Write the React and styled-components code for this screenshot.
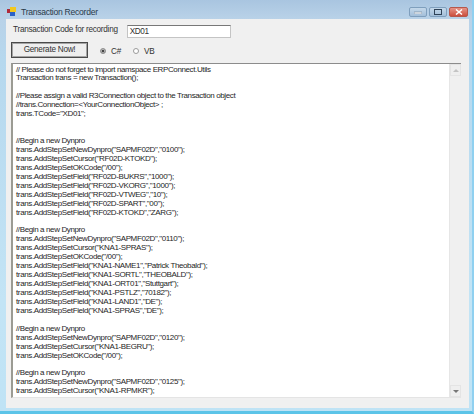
import React from "react";
import styled, { createGlobalStyle } from "styled-components";

const Global = createGlobalStyle`
  html, body {
    margin: 0;
    padding: 0;
    width: 474px;
    height: 414px;
    overflow: hidden;
    background: #9fd6f2;
  }
  * { box-sizing: border-box; }
`;

const code = `// Please do not forget to import namspace ERPConnect.Utils
Transaction trans = new Transaction();

//Please assign a valid R3Connection object to the Transaction object
//trans.Connection=<YourConnectionObject> ;
trans.TCode="XD01";


//Begin a new Dynpro
trans.AddStepSetNewDynpro("SAPMF02D","0100");
trans.AddStepSetCursor("RF02D-KTOKD");
trans.AddStepSetOKCode("/00");
trans.AddStepSetField("RF02D-BUKRS","1000");
trans.AddStepSetField("RF02D-VKORG","1000");
trans.AddStepSetField("RF02D-VTWEG","10");
trans.AddStepSetField("RF02D-SPART","00");
trans.AddStepSetField("RF02D-KTOKD","ZARG");

//Begin a new Dynpro
trans.AddStepSetNewDynpro("SAPMF02D","0110");
trans.AddStepSetCursor("KNA1-SPRAS");
trans.AddStepSetOKCode("/00");
trans.AddStepSetField("KNA1-NAME1","Patrick Theobald");
trans.AddStepSetField("KNA1-SORTL","THEOBALD");
trans.AddStepSetField("KNA1-ORT01","Stuttgart");
trans.AddStepSetField("KNA1-PSTLZ","70182");
trans.AddStepSetField("KNA1-LAND1","DE");
trans.AddStepSetField("KNA1-SPRAS","DE");

//Begin a new Dynpro
trans.AddStepSetNewDynpro("SAPMF02D","0120");
trans.AddStepSetCursor("KNA1-BEGRU");
trans.AddStepSetOKCode("/00");

//Begin a new Dynpro
trans.AddStepSetNewDynpro("SAPMF02D","0125");
trans.AddStepSetCursor("KNA1-RPMKR");`;

const Frame = styled.div`
  width: 474px;
  height: 414px;
  padding: 0 3px 3px 6px;
  display: flex;
  flex-direction: column;
  background: linear-gradient(180deg, #a9c5e0 0, #b9d2e8 19px, #b6d8ee 60px, #c3e4f5 300px, #bfe3f5 100%);
  border-right: 2px solid #8fd0f0;
  border-bottom: 3px solid #5cc4e8;
`;

const TitleBar = styled.div`
  height: 19px;
  flex: none;
  display: flex;
  align-items: center;
  gap: 4px;
  padding-left: 1px;
`;

const Title = styled.span`
  font: 8.6px "Liberation Sans", Arial, sans-serif;
  letter-spacing: -0.28px;
  color: #2a3a4a;
  flex: 1;
  margin-top: 5px;
`;

const Controls = styled.div`
  display: flex;
  gap: 2px;
  align-self: flex-start;
  margin-top: 7px;
  margin-right: 1px;
`;

const Control = styled.div`
  width: ${(p) => p.$w}px;
  height: 10px;
  border: 1px solid ${(p) => (p.$close ? "#b5584c" : "#7f9fbd")};
  border-radius: 2px;
  background: ${(p) =>
    p.$close
      ? "linear-gradient(180deg, #e59488, #cc4f3e)"
      : "linear-gradient(180deg, #c4d8ea, #a3bfd9)"};
  display: flex;
  align-items: center;
  justify-content: center;
`;

const Body = styled.div`
  flex: 1;
  min-height: 0;
  background: #f0f0f0;
  display: flex;
  flex-direction: column;
  padding: 6px 8px 10px 5px;
`;

const CodeRow = styled.div`
  display: flex;
  align-items: flex-start;
  height: 14px;
  gap: 9px;
  font: 8.2px "Liberation Sans", Arial, sans-serif;
  letter-spacing: -0.26px;
  color: #333;
`;

const CodeLabel = styled.label`
  padding: 0 0 0 2px;
`;

const CodeInput = styled.div`
  width: 104px;
  height: 13px;
  background: #fff;
  border: 1px solid #c4c4c4;
  border-top-color: #777;
  padding-left: 2px;
  font-size: 8.2px;
  letter-spacing: -0.4px;
  line-height: 12px;
`;

const ActionRow = styled.div`
  display: flex;
  align-items: center;
  gap: 12px;
  margin-top: 2px;
  height: 17px;
`;

const GenerateButton = styled.button`
  width: 77px;
  height: 16px;
  padding: 0;
  background: #eeeeee;
  border: 1px solid #4a4a4a;
  box-shadow: inset 0 0 0 1px #a4a4a4;
  font: 8.2px "Liberation Sans", Arial, sans-serif;
  letter-spacing: -0.26px;
  color: #333;
`;

const Radio = styled.label`
  display: flex;
  align-items: center;
  gap: 5px;
  margin-top: 3px;
  font: 8.2px "Liberation Sans", Arial, sans-serif;
  letter-spacing: -0.26px;
  color: #333;
`;

const RadioDot = styled.span`
  width: 6px;
  height: 6px;
  border-radius: 50%;
  border: 1px solid #9a9a9a;
  background: ${(p) => (p.$on ? "#444" : "#fff")};
  box-shadow: ${(p) => (p.$on ? "inset 0 0 0 0.5px #fff" : "none")};
`;

const Output = styled.div`
  flex: 1;
  min-height: 0;
  margin-top: 5px;
  display: flex;
  background: #fff;
  border-top: 1px solid #8c8c8c;
  border-left: 2px solid #9b9b93;
  border-bottom: 1px solid #e4e4e4;
`;

const CodeText = styled.pre`
  flex: 1;
  margin: 0;
  padding: 1.5px 0 0 3px;
  overflow: hidden;
  font: 8px/8.94px "Liberation Sans", Arial, sans-serif;
  letter-spacing: -0.38px;
  color: #262626;
`;

const ScrollBar = styled.div`
  width: 12px;
  flex: none;
  display: flex;
  flex-direction: column;
  justify-content: space-between;
  background: #f0f0f0;
  border-left: 1px solid #e6e6e6;
`;

const ScrollButton = styled.div`
  height: 12px;
  display: flex;
  align-items: center;
  justify-content: center;
  background: #efefef;
  border: 1px solid #e4e4e4;
`;

const Arrow = styled.span`
  width: 0;
  height: 0;
  border-left: 3px solid transparent;
  border-right: 3px solid transparent;
  border-${(p) => (p.$up ? "bottom" : "top")}: 3px solid ${(p) => (p.$up ? "#c4c4c4" : "#777")};
`;

const AppIcon = () => (
  <svg width="10" height="10" viewBox="0 0 10 10" style={{ marginTop: 5 }}>
    <rect x="0" y="2" width="3" height="4" fill="#b02a3a" />
    <rect x="3" y="0" width="6" height="5" fill="#f2c81e" />
    <rect x="3" y="5" width="5" height="4" fill="#2a62c8" />
  </svg>
);

export default function App() {
  return (
    <>
      <Global />
      <Frame>
        <TitleBar>
          <AppIcon />
          <Title>Transaction Recorder</Title>
          <Controls>
            <Control $w={18}>
              <svg width="8" height="3"><rect y="1" width="8" height="2" fill="#f4f8fb" stroke="#5a6f85" strokeWidth="0.5" /></svg>
            </Control>
            <Control $w={18}>
              <svg width="8" height="6"><rect x="0.5" y="0.5" width="7" height="5" fill="none" stroke="#2f4358" strokeWidth="1" /></svg>
            </Control>
            <Control $w={19} $close>
              <svg width="8" height="6"><path d="M1 0.5 L7 5.5 M7 0.5 L1 5.5" stroke="#fff" strokeWidth="1.5" /></svg>
            </Control>
          </Controls>
        </TitleBar>
        <Body>
          <CodeRow>
            <CodeLabel>Transaction Code for recording</CodeLabel>
            <CodeInput>XD01</CodeInput>
          </CodeRow>
          <ActionRow>
            <GenerateButton>Generate Now!</GenerateButton>
            <Radio><RadioDot $on />C#</Radio>
            <Radio><RadioDot />VB</Radio>
          </ActionRow>
          <Output>
            <CodeText>{code}</CodeText>
            <ScrollBar>
              <ScrollButton><Arrow $up /></ScrollButton>
              <ScrollButton><Arrow /></ScrollButton>
            </ScrollBar>
          </Output>
        </Body>
      </Frame>
    </>
  );
}
